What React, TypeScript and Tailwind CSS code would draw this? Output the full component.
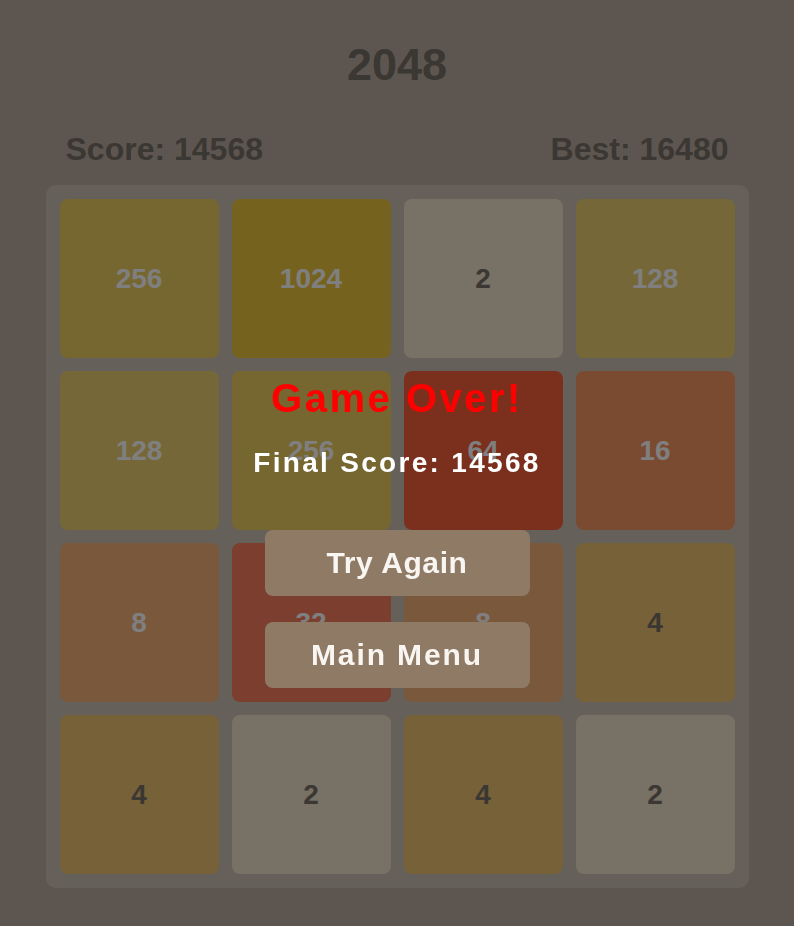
const board: number[][] = [
  [256, 1024, 2, 128],
  [128, 256, 64, 16],
  [8, 32, 8, 4],
  [4, 2, 4, 2],
];

// classic-ish palette, everything gets dimmed by the game over veil
const tileStyle: Record<number, string> = {
  2: 'bg-[#eee2cc] text-[#776e65]',
  4: 'bg-[#ecc272] text-[#776e65]',
  8: 'bg-[#f2b179] text-white',
  16: 'bg-[#f59563] text-white',
  32: 'bg-[#f67c5f] text-white',
  64: 'bg-[#f65e3b] text-white',
  128: 'bg-[#edcf72] text-white',
  256: 'bg-[#edcc61] text-white',
  1024: 'bg-[#edc53f] text-white',
};

function Tile({ value }: { value: number }) {
  return (
    <div
      className={`flex aspect-square items-center justify-center rounded-lg text-[28px] font-bold leading-none ${tileStyle[value]}`}
    >
      {value}
    </div>
  );
}

export default function App() {
  const score = 14568;
  const best = 16480;

  return (
    <div
      className="min-h-screen bg-[#bbada0] pt-[42px] text-[#776e65]"
      style={{ fontFamily: '"Liberation Sans", Arial, sans-serif' }}
    >
      <div className="mx-auto w-[703px]">
        <h1 className="text-center text-[45px] font-bold leading-none">2048</h1>

        <div className="mt-[46px] flex justify-between px-5 text-[32px] font-bold leading-none">
          <span>Score: {score}</span>
          <span>Best: {best}</span>
        </div>

        <div className="relative mt-5">
          <div className="grid grid-cols-4 gap-[13px] rounded-[10px] bg-[#cdc1b4] p-[14px]">
            {board.flat().map((v, i) => (
              <Tile key={i} value={v} />
            ))}
          </div>

          {/* Game over panel */}
          <div className="absolute inset-0 z-20 flex flex-col items-center justify-center pb-[8px]">
            <div className="text-[40px] font-bold leading-none tracking-[2.5px] text-[#ff0000]">Game Over!</div>
            <div className="mt-[31px] text-[28px] font-bold leading-none tracking-[2.3px] text-white">
              Final Score: {score}
            </div>
            <button className="mt-[53px] flex h-[66px] w-[265px] items-center justify-center rounded-lg bg-[#8f7a66] text-[30px] font-bold tracking-[0.6px] text-[#f9f6f2]">
              Try Again
            </button>
            <button className="mt-[26px] flex h-[66px] w-[265px] items-center justify-center rounded-lg bg-[#8f7a66] text-[30px] font-bold tracking-[1.9px] text-[#f9f6f2]">
              Main Menu
            </button>
          </div>
        </div>
      </div>

      {/* dim veil */}
      <div className="fixed inset-0 z-10 bg-black/50" />
    </div>
  );
}
